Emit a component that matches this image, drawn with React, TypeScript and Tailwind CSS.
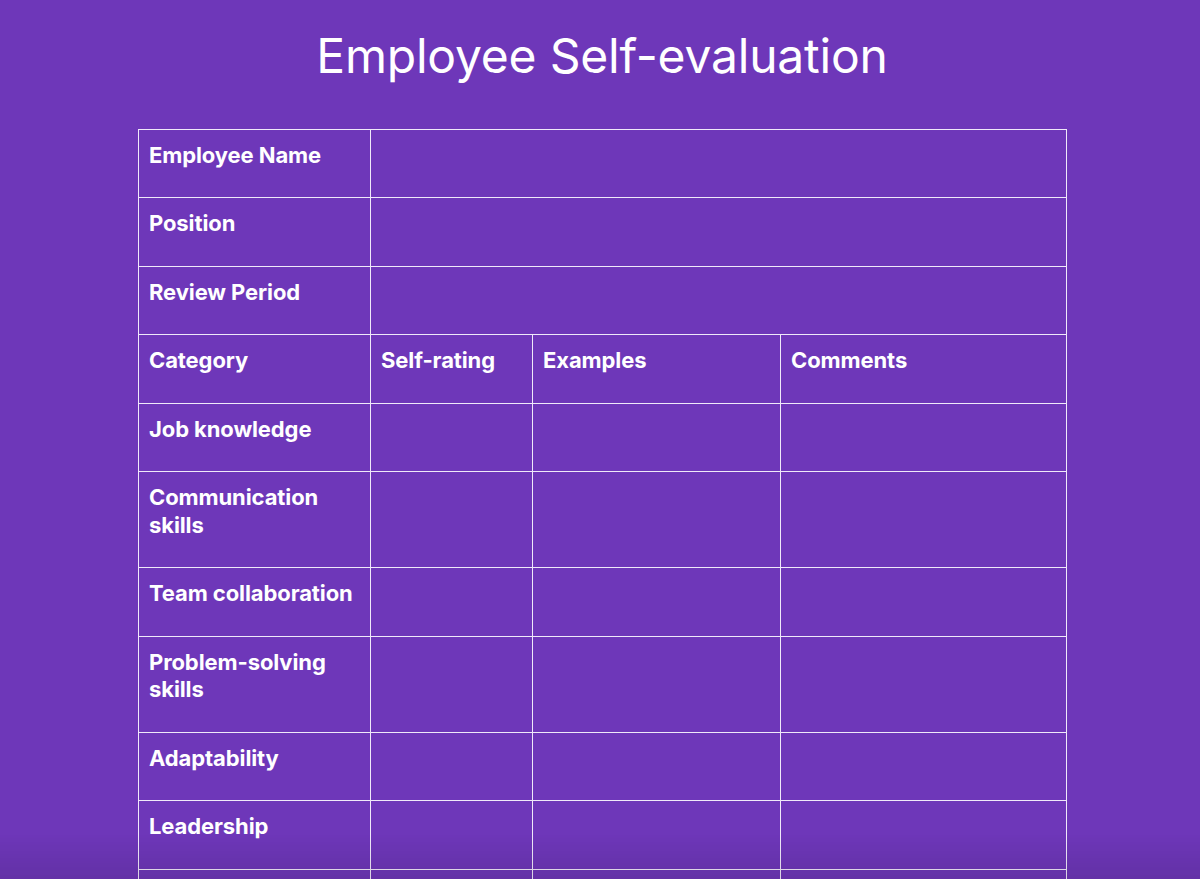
import React from "react";

const rows: string[] = [
  "Job knowledge",
  "Communication skills",
  "Team collaboration",
  "Problem-solving skills",
  "Adaptability",
  "Leadership",
  "Time management",
  "Goal achievement",
];

const cell =
  "border border-[#f0e9fa] align-top px-[10px] pt-[12px] pb-[28px] text-[22px] leading-[27.5px] font-bold text-left tracking-[-0.1px]";

export default function App() {
  return (
    <div
      className="relative min-h-[879px] bg-[#6e37b9] text-white overflow-hidden"
      style={{ fontFamily: "Inter, 'Noto Sans', sans-serif" }}
    >
      <h1 className="pt-[27px] text-center text-[48px] leading-[57.6px] font-normal tracking-[-0.2px] pl-[4px]">
        Employee Self-evaluation
      </h1>
      <div className="mt-[44px] ml-[138px] w-[929px]">
        <table className="w-full table-fixed border-collapse">
          <colgroup>
            <col className="w-[232px]" />
            <col className="w-[162px]" />
            <col className="w-[248px]" />
            <col />
          </colgroup>
          <tbody>
            {["Employee Name", "Position", "Review Period"].map((r) => (
              <tr key={r}>
                <td className={cell}>{r}</td>
                <td className={cell} colSpan={3}></td>
              </tr>
            ))}
            <tr>
              <td className={cell}>Category</td>
              <td className={cell}>Self-rating</td>
              <td className={cell}>Examples</td>
              <td className={cell}>Comments</td>
            </tr>
            {rows.map((r) => (
              <tr key={r}>
                <td className={cell}>{r}</td>
                <td className={cell}></td>
                <td className={cell}></td>
                <td className={cell}></td>
              </tr>
            ))}
          </tbody>
        </table>
      </div>
      <div className="pointer-events-none fixed bottom-0 left-0 right-0 h-[45px] bg-gradient-to-b from-transparent to-black/10" />
    </div>
  );
}
